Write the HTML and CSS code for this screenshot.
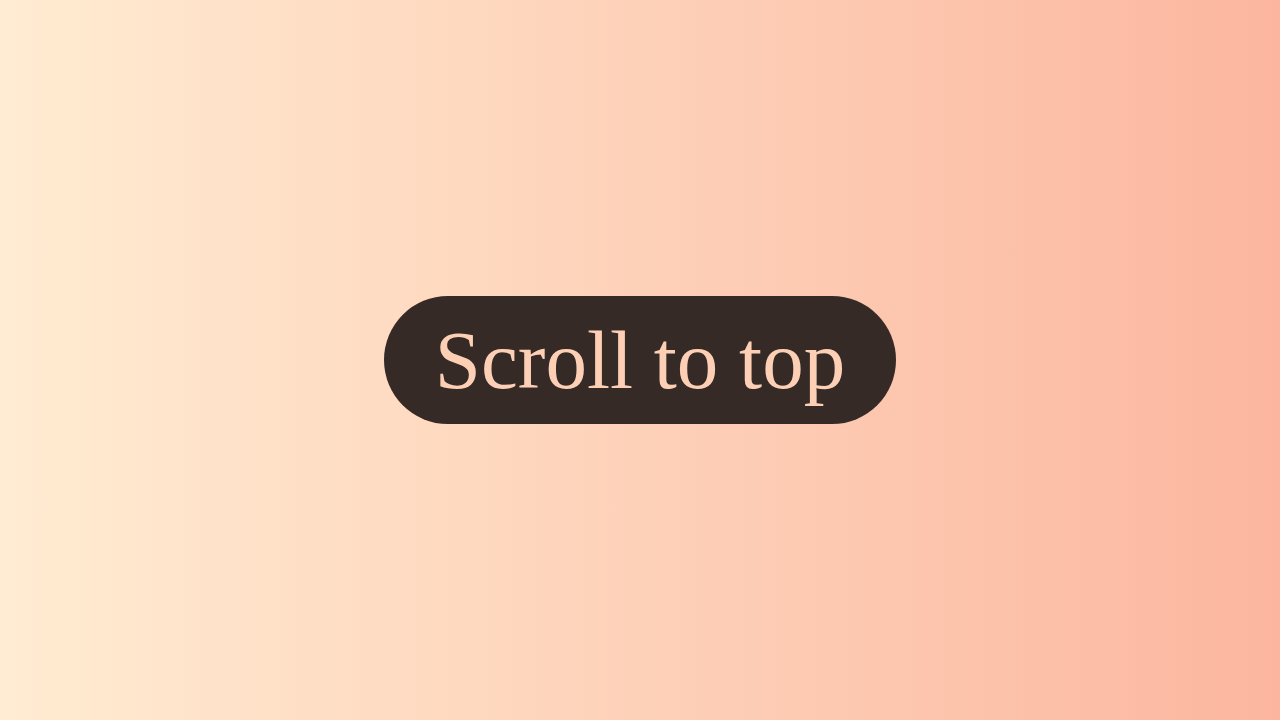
FILE: index.html
```html
<!DOCTYPE html>
<html lang="en">
<head>
    <meta charset="UTF-8">
    <meta name="viewport" content="width=device-width, initial-scale=1.0">
    <title>Scroll to top</title>
    <link rel="stylesheet" href="styles.css">
</head>
<body>
    <section class="hero">
        <button class="to-top">Scroll to top</button>
    </section>
    <section class="filler"></section>
</body>
</html>
```

FILE: styles.css
```css
html::-webkit-scrollbar {
    width: 15px;
    background: #f1f1f1;
}
html::-webkit-scrollbar-thumb {
    background: #c1c1c1;
    border: 2px solid #f1f1f1;
}
body {
    margin: 0;
    font-family: "Liberation Serif", "Times New Roman", serif;
    background: linear-gradient(to right, #ffecd2, #fcb69f);
}
.hero {
    height: 100vh;
    display: flex;
    align-items: center;
    justify-content: center;
}
.filler {
    height: 1340px;
}
.to-top {
    font-family: inherit;
    font-size: 83px;
    line-height: 96px;
    padding: 16px 51px;
    border: none;
    border-radius: 64px;
    background: #352a26;
    color: #fdd0b6;
    cursor: pointer;
}
```
